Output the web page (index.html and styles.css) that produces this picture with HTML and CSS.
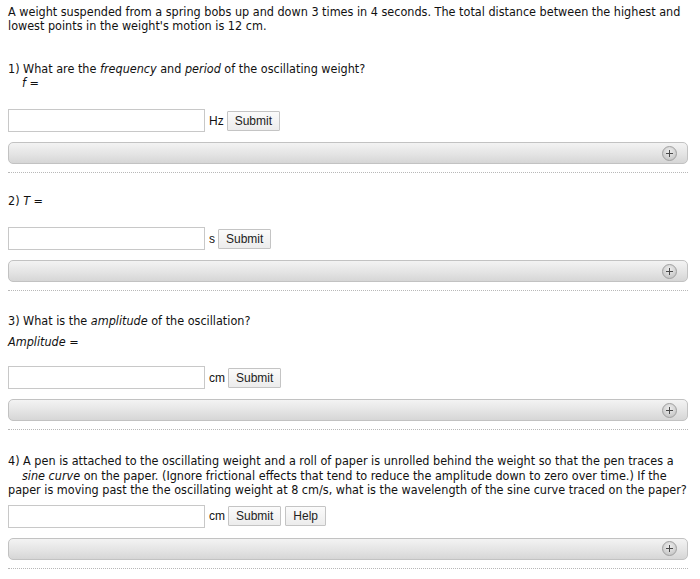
FILE: index.html
```html
<!DOCTYPE html>
<html>
<head>
<meta charset="utf-8">
<link rel="stylesheet" href="styles.css">
</head>
<body>
<div class="page">
  <p class="intro">A weight suspended from a spring bobs up and down 3 times in 4 seconds. The total distance between the highest and<br>lowest points in the weight's motion is 12 cm.</p>

  <div class="part p1">
    <p class="q">1) What are the <i>frequency</i> and <i>period</i> of the oscillating weight?<br><span class="ind"><i>f</i> =</span></p>
    <div class="row">
      <input class="answer" type="text">
      <span class="unit">Hz</span>
      <button class="btn">Submit</button>
    </div>
    <div class="bar"><span class="plus"></span></div>
    <div class="sep"></div>
  </div>

  <div class="part p2">
    <p class="q">2) <i>T</i> =</p>
    <div class="row">
      <input class="answer" type="text">
      <span class="unit">s</span>
      <button class="btn">Submit</button>
    </div>
    <div class="bar"><span class="plus"></span></div>
    <div class="sep"></div>
  </div>

  <div class="part p3">
    <p class="q">3) What is the <i>amplitude</i> of the oscillation?</p>
    <p class="q2"><i>Amplitude</i> =</p>
    <div class="row">
      <input class="answer" type="text">
      <span class="unit">cm</span>
      <button class="btn">Submit</button>
    </div>
    <div class="bar"><span class="plus"></span></div>
    <div class="sep"></div>
  </div>

  <div class="part p4">
    <p class="q">4) A pen is attached to the oscillating weight and a roll of paper is unrolled behind the weight so that the pen traces a<br><span class="ind"><i>sine curve</i> on the paper. (Ignore frictional effects that tend to reduce the amplitude down to zero over time.) If the</span><br>paper is moving past the the oscillating weight at 8 cm/s, what is the wavelength of the sine curve traced on the paper?</p>
    <div class="row">
      <input class="answer" type="text">
      <span class="unit">cm</span>
      <button class="btn">Submit</button>
      <button class="btn">Help</button>
    </div>
    <div class="bar"><span class="plus"></span></div>
    <div class="sep"></div>
  </div>
</div>
</body>
</html>
```
FILE: styles.css
```css
html, body {
  margin: 0;
  padding: 0;
  background: #ffffff;
}
.page {
  padding: 5px 0 0 8px;
  width: 680px;
  font-family: "DejaVu Sans Condensed", "DejaVu Sans", sans-serif;
  font-size: 12.5px;
  line-height: 14px;
  color: #111;
  white-space: nowrap;
}
p { margin: 0; }
.intro { margin-bottom: 29px; }
.ind { padding-left: 14px; }
.q2 { margin-top: 7px; }
.p3 .q { padding-top: 2px; }
.p4 .q { padding-top: 3px; line-height: 14.5px; }
.row {
  display: flex;
  align-items: center;
  margin-top: 19px;
  height: 23px;
}
.p3 .row { margin-top: 17px; }
.p4 .row { margin-top: 7px; }
.answer {
  box-sizing: border-box;
  width: 197px;
  height: 23px;
  margin: 0;
  border: 1px solid #c8c8c8;
  background: #fff;
  padding: 0;
}
.unit {
  font-family: "Liberation Sans", Arial, sans-serif;
  font-size: 12px;
  color: #111;
  margin: 0 3px 0 4px;
}
.btn {
  box-sizing: border-box;
  height: 20px;
  margin: 0 4px 0 0;
  padding: 0 7px;
  border: 1px solid #c4c4c4;
  background: linear-gradient(#fbfbfb, #ececec);
  font-family: "Liberation Sans", Arial, sans-serif;
  font-size: 12px;
  color: #222;
  border-radius: 1px;
}
.bar {
  box-sizing: border-box;
  height: 22px;
  margin-top: 10px;
  border: 1px solid #c2c2c2;
  border-radius: 5px;
  background: linear-gradient(#f3f3f3, #e4e4e4 55%, #d6d6d6);
  display: flex;
  justify-content: flex-end;
  align-items: center;
  padding-right: 10px;
}
.plus {
  position: relative;
  box-sizing: border-box;
  width: 15px;
  height: 15px;
  border-radius: 50%;
  border: 1px solid #a0a0a0;
  background: radial-gradient(circle at 50% 35%, #eeeeee, #bdbdbd);
}
.plus::before, .plus::after {
  content: "";
  position: absolute;
  background: #4a4a4a;
}
.plus::before { left: 3px; top: 6px; width: 7px; height: 1px; }
.plus::after { left: 6px; top: 3px; width: 1px; height: 7px; }
.sep {
  margin-top: 8px;
  border-top: 1px dotted #b8b8b8;
  margin-bottom: 21px;
}
```
